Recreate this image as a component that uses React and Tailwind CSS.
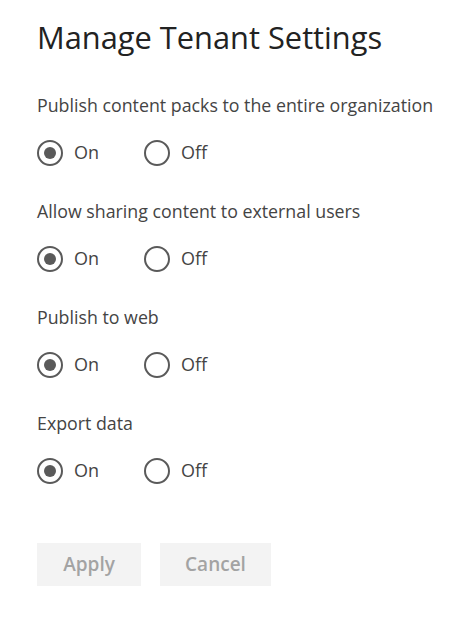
import React, { useState } from "react";

const settings = [
  "Publish content packs to the entire organization",
  "Allow sharing content to external users",
  "Publish to web",
  "Export data",
];

function Radio({ checked, label, onClick }) {
  return (
    <button type="button" onClick={onClick} className="flex items-center gap-[11px]">
      <span className="flex h-[26px] w-[26px] items-center justify-center rounded-full border-[2.5px] border-[#5a5a5a]">
        {checked && <span className="h-[12px] w-[12px] rounded-full bg-[#5a5a5a]" />}
      </span>
      <span className="text-[18px] text-[#444]">{label}</span>
    </button>
  );
}

function Setting({ title }) {
  const [on, setOn] = useState(true);
  return (
    <div className="flex flex-col">
      <div className="text-[17.8px] leading-[24px] text-[#444]">{title}</div>
      <div className="mt-[22px] flex items-center gap-[45px]">
        <Radio checked={on} label="On" onClick={() => setOn(true)} />
        <Radio checked={!on} label="Off" onClick={() => setOn(false)} />
      </div>
    </div>
  );
}

export default function App() {
  return (
    <div
      className="min-h-screen bg-white px-[37px] pt-[15px]"
      style={{ fontFamily: '"Open Sans", "Noto Sans", sans-serif' }}
    >
      <h1 className="text-[30.8px] leading-[44px] text-[#222]">Manage Tenant Settings</h1>
      <div className="mt-[34px] flex flex-col gap-[33px]">
        {settings.map((s) => (
          <Setting key={s} title={s} />
        ))}
      </div>
      <div className="mt-[59px] flex gap-[19px]">
        <button className="h-[43px] w-[104px] bg-[#f3f3f3] text-[19px] font-semibold text-[#a3a3a3]">Apply</button>
        <button className="h-[43px] w-[111px] bg-[#f3f3f3] text-[19px] font-semibold text-[#a3a3a3]">Cancel</button>
      </div>
    </div>
  );
}
